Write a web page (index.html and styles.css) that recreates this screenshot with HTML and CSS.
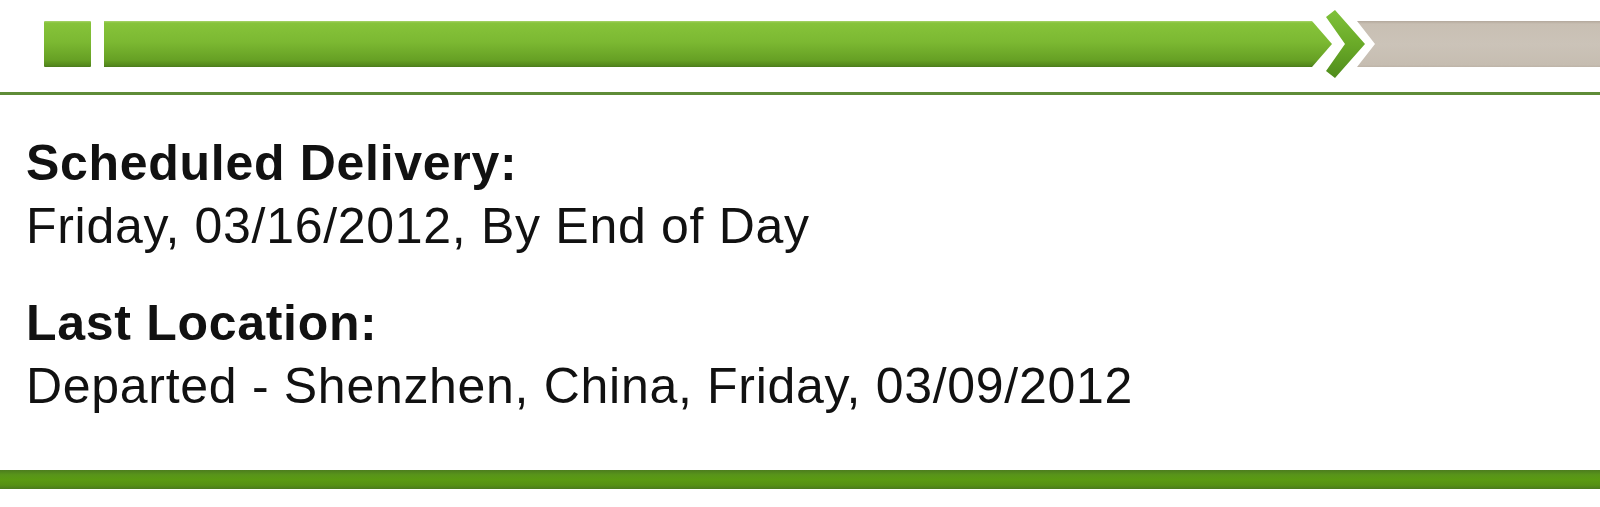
FILE: index.html
```html
<!DOCTYPE html>
<html lang="en">
<head>
    <meta charset="UTF-8">
    <meta name="viewport" content="width=device-width, initial-scale=1.0">
    <title>Shipment Progress</title>
    <link rel="stylesheet" href="styles.css">
</head>
<body>

    <div class="tracker">
        <!-- barra de progresso do envio -->
        <div class="progress">
            <div class="step step-first"></div>
            <div class="step step-main"></div>
            <svg class="chevron" width="39" height="68" viewBox="0 0 39 68">
                <defs>
                    <linearGradient id="chev" x1="0" y1="0" x2="0" y2="1">
                        <stop offset="0" stop-color="#7fc13a"/>
                        <stop offset="0.5" stop-color="#6aaa28"/>
                        <stop offset="1" stop-color="#4f8c1c"/>
                    </linearGradient>
                </defs>
                <polygon points="0,7 9,0 39,34 9,68 0,61 19,34" fill="url(#chev)"/>
            </svg>
            <div class="step step-todo"></div>
        </div>

        <div class="details">
            <div class="field">
                <p class="label">Scheduled Delivery:</p>
                <p class="value">Friday, 03/16/2012, By End of Day</p>
            </div>
            <div class="field">
                <p class="label">Last Location:</p>
                <p class="value">Departed - Shenzhen, China, Friday, 03/09/2012</p>
            </div>
        </div>

        <div class="footer-bar"></div>
    </div>

</body>
</html>
```

FILE: styles.css
```css
* {
    margin: 0;
    padding: 0;
    box-sizing: border-box;
}
body {
    background-color: #fff;
    font-family: "Liberation Sans", Arial, sans-serif;
    color: #111;
}
.tracker {
    width: 100%;
}
.progress {
    display: flex;
    align-items: center;
    height: 68px;
    margin-top: 10px;
    margin-bottom: 14px;
}
.step {
    height: 46px;
}
.step-first,
.step-main {
    background: linear-gradient(to bottom, #a9d36b 0, #86c33a 2px, #7cb932 45%, #66a024 85%, #558a1d 96%, #4b7a1c 100%);
}
.step-first {
    width: 47px;
    margin-left: 44px;
    border-radius: 1px;
}
.step-main {
    width: 1228px;
    margin-left: 13px;
    clip-path: polygon(0 0, calc(100% - 20px) 0, 100% 50%, calc(100% - 20px) 100%, 0 100%);
}
.chevron {
    flex-shrink: 0;
    margin-left: -6px;
}
.step-todo {
    flex: 1;
    margin-left: -8px;
    background: linear-gradient(to bottom, #b3a89c 0, #c8bfb3 3px, #cbc3b8 50%, #c6bdb1 95%, #bdb3a7 100%);
    clip-path: polygon(0 0, 100% 0, 100% 100%, 0 100%, 18px 50%);
}
.details {
    border-top: 3px solid #5f8c38;
    padding: 37px 26px 52px;
    display: flex;
    flex-direction: column;
    gap: 34px;
}
.field p {
    font-size: 50px;
    line-height: 63px;
    letter-spacing: 0.7px;
    white-space: nowrap;
}
.label {
    font-weight: bold;
}
.footer-bar {
    height: 19px;
    background: linear-gradient(to bottom, #4c7d1e 0, #58941a 25%, #5a9a12 50%, #559013 80%, #4a7a1d 100%);
}
```
